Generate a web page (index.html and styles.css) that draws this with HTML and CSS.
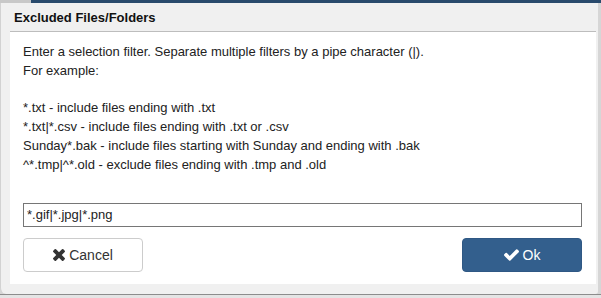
FILE: index.html
```html
<!DOCTYPE html>
<html>
<head>
<meta charset="utf-8">
<link rel="stylesheet" href="styles.css">
</head>
<body>
<div class="topstrip"><div class="topstrip-left"></div><div class="topstrip-right"></div></div>
<div class="dialog">
  <div class="dialog-title">Excluded Files/Folders</div>
  <div class="dialog-body">
    <div class="help">
      Enter a selection filter. Separate multiple filters by a pipe character (|).<br>
      For example:<br>
      <br>
      *.txt - include files ending with .txt<br>
      *.txt|*.csv - include files ending with .txt or .csv<br>
      Sunday*.bak - include files starting with Sunday and ending with .bak<br>
      ^*.tmp|^*.old - exclude files ending with .tmp and .old
    </div>
    <input class="filter" type="text" value="*.gif|*.jpg|*.png">
    <div class="buttons">
      <button class="btn btn-cancel"><svg class="ico-x" viewBox="110 366 1188 1188"><path d="M1298 1322q0 40-28 68l-136 136q-28 28-68 28t-68-28l-294-294-294 294q-28 28-68 28t-68-28l-136-136q-28-28-28-68t28-68l294-294-294-294q-28-28-28-68t28-68l136-136q28-28 68-28t68 28l294 294 294-294q28-28 68-28t68 28l136 136q28 28 28 68t-28 68l-294 294 294 294q28 28 28 68z"/></svg><span>Cancel</span></button>
      <button class="btn btn-ok"><svg class="ico-check" viewBox="121 334 1550 1188"><path d="M1671 566q0 40-28 68l-724 724-136 136q-28 28-68 28t-68-28l-136-136-362-362q-28-28-28-68t28-68l136-136q28-28 68-28t68 28l294 295 656-657q28-28 68-28t68 28l136 136q28 28 28 68z"/></svg><span>Ok</span></button>
    </div>
  </div>
</div>
<div class="bottomstrip"></div>
</body>
</html>
```
FILE: styles.css
```css
html, body {
  margin: 0;
  padding: 0;
}
body {
  width: 601px;
  height: 298px;
  overflow: hidden;
  background: #d6d6d6;
  font-family: "Liberation Sans", Arial, sans-serif;
}
.topstrip {
  display: flex;
  height: 3px;
}
.topstrip-left {
  width: 31px;
  background: #c8c8c8;
}
.topstrip-right {
  flex: 1;
  background: #294a6c;
}
.dialog {
  width: 598px;
  height: 291px;
  box-sizing: border-box;
  background: #f0f0f0;
  border-left: 1px solid #d2d2d2;
  border-radius: 0 0 3px 6px;
  display: flex;
  flex-direction: column;
}
.dialog-title {
  height: 28px;
  padding-left: 13px;
  font-size: 13px;
  font-weight: bold;
  color: #111;
  line-height: 28px;
  box-sizing: border-box;
  padding-top: 1px;
}
.dialog-body {
  margin-left: 9px;
  width: 586px;
  height: 253px;
  box-sizing: border-box;
  background: #fff;
  border-top: 1px solid #bdbdbd;
  padding: 11px 14px 0 13px;
}
.help {
  font-size: 13px;
  line-height: 18.8px;
  color: #222;
}
.filter {
  display: block;
  margin-top: 28px;
  width: 559px;
  height: 24px;
  box-sizing: border-box;
  border: 1px solid #767676;
  border-radius: 0;
  padding: 0 3px;
  font-family: "Liberation Sans", Arial, sans-serif;
  font-size: 13px;
  color: #222;
  outline: none;
}
.buttons {
  display: flex;
  justify-content: space-between;
  margin-top: 11px;
}
.btn {
  height: 34px;
  width: 120px;
  box-sizing: border-box;
  border-radius: 4px;
  font-family: "Liberation Sans", Arial, sans-serif;
  font-size: 14px;
  display: flex;
  align-items: center;
  justify-content: center;
  gap: 4px;
  padding: 0;
}
.btn-cancel {
  background: #fff;
  border: 1px solid #cccccc;
  color: #333;
}
.btn-ok {
  background: #335f8d;
  border: 1px solid #2f5884;
  color: #fff;
}
.ico-x {
  width: 12px;
  height: 12px;
  fill: #333;
}
.ico-check {
  width: 15px;
  height: 12px;
  fill: #fff;
}
.bottomstrip {
  height: 4px;
  border-top: 1px solid #8c8c8c;
  background: #e4e4e4;
}
```
